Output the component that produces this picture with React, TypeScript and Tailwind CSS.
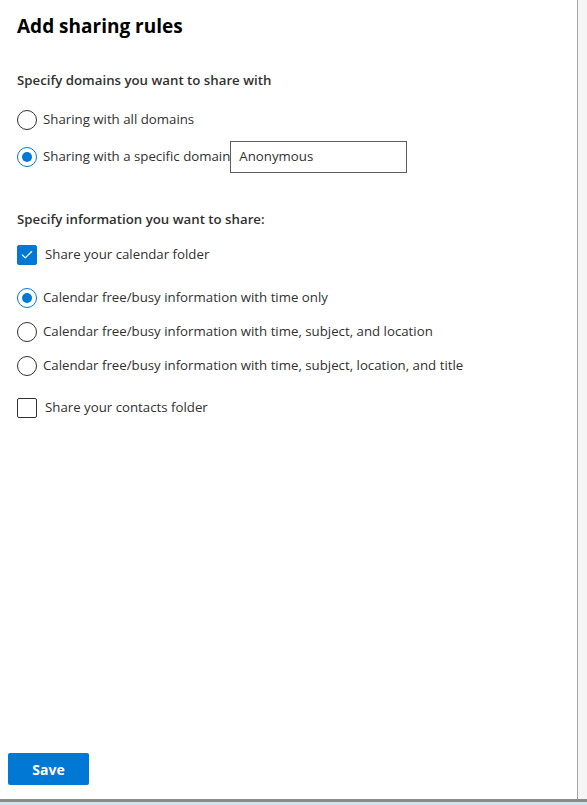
import { Check } from "lucide-react"

const font = { fontFamily: "'Open Sans', 'Noto Sans', sans-serif" }

function Radio({ checked, label }: { checked?: boolean; label: string }) {
  return (
    <div className="flex items-center h-5">
      <span
        className={`w-5 h-5 rounded-full border flex items-center justify-center shrink-0 ${
          checked ? "border-[#0078d4]" : "border-[#323130]"
        }`}
      >
        {checked && <span className="w-[10px] h-[10px] rounded-full bg-[#0078d4]" />}
      </span>
      <span className="ml-[6px] text-[13.25px] text-[#323130] whitespace-nowrap">{label}</span>
    </div>
  )
}

function Checkbox({ checked, label }: { checked?: boolean; label: string }) {
  return (
    <div className="flex items-center h-5">
      <span
        className={`w-5 h-5 rounded-[2px] border flex items-center justify-center shrink-0 ${
          checked ? "bg-[#0078d4] border-[#0078d4]" : "border-[#323130] bg-white"
        }`}
      >
        {checked && <Check className="w-[14px] h-[14px] text-white" strokeWidth={2} />}
      </span>
      <span className="ml-[8px] text-[13.25px] text-[#323130] whitespace-nowrap">{label}</span>
    </div>
  )
}

export default function App() {
  return (
    <div className="w-[587px] h-[805px] flex flex-col bg-white" style={font}>
      <div className="flex flex-1 min-h-0">
        <div className="flex-1 flex flex-col bg-white border-r border-[#a6a6a6]">
          <div className="pl-[17px] flex flex-col">
            <h1 className="mt-[12px] text-[19px] leading-[28px] font-bold text-[#000]">Add sharing rules</h1>

            <p className="mt-[30px] text-[13.25px] leading-5 font-semibold text-[#323130]">
              Specify domains you want to share with
            </p>

            <div className="mt-[20px]">
              <Radio label="Sharing with all domains" />
            </div>

            <div className="mt-[11px] flex items-center h-8">
              <Radio checked label="Sharing with a specific domain" />
              <div className="w-[177px] h-8 border border-[#605e5c] flex items-center px-2 text-[13.25px] text-[#323130]">
                Anonymous
              </div>
            </div>

            <p className="mt-[36px] text-[13.25px] leading-5 font-semibold text-[#323130]">
              Specify information you want to share:
            </p>

            <div className="mt-[16px]">
              <Checkbox checked label="Share your calendar folder" />
            </div>

            <div className="mt-[23px]">
              <Radio checked label="Calendar free/busy information with time only" />
            </div>
            <div className="mt-[14px]">
              <Radio label="Calendar free/busy information with time, subject, and location" />
            </div>
            <div className="mt-[14px]">
              <Radio label="Calendar free/busy information with time, subject, location, and title" />
            </div>

            <div className="mt-[22px]">
              <Checkbox label="Share your contacts folder" />
            </div>
          </div>

          <div className="mt-auto pl-[8px] pb-[14px]">
            <button className="w-[81px] h-8 rounded-[2px] bg-[#0078d4] text-white text-[14px] font-bold">
              Save
            </button>
          </div>
        </div>
        <div className="w-[9px] bg-[#f5f5f5]" />
      </div>
      <div className="h-[3px] bg-[#8a8a8a]" />
      <div className="h-[3px] bg-[#cde4ec]" />
    </div>
  )
}
